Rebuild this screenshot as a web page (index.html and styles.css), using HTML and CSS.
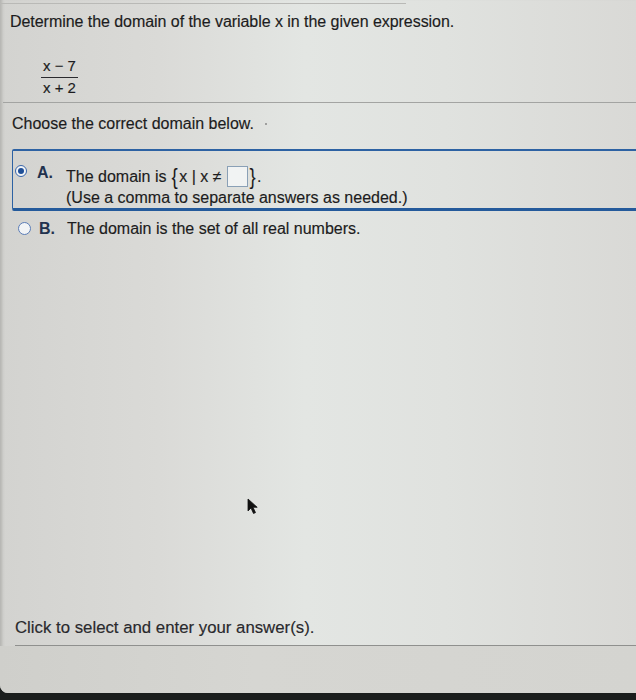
FILE: index.html
```html
<!DOCTYPE html>
<html>
<head>
<meta charset="utf-8">
<link rel="stylesheet" href="styles.css">
</head>
<body>
<div class="screen">
  <div class="topline"></div>
  <section class="question">
    <p class="title">Determine the domain of the variable x in the given expression.</p>
    <div class="frac">
      <span class="num">x − 7</span>
      <span class="den">x + 2</span>
    </div>
  </section>
  <div class="sep"></div>
  <p class="choose">Choose the correct domain below.<span class="speck"></span></p>
  <div class="opt opt-a">
    <span class="radio on"><span class="dotin"></span></span>
    <span class="letter">A.</span>
    <div class="opt-text">
      <div class="line1">The domain is <span class="brace first">{</span>x | x ≠<span class="ansbox"></span><span class="brace">}</span>.</div>
      <div class="line2">(Use a comma to separate answers as needed.)</div>
    </div>
  </div>
  <div class="opt opt-b">
    <span class="radio"></span>
    <span class="letter">B.</span>
    <div class="opt-text">The domain is the set of all real numbers.</div>
  </div>
  <div class="blank">
    <svg class="cursor" width="12" height="17" viewBox="0 0 12 17"><path d="M1 1 L1 13 L4 10 L6.5 15.5 L8.5 14.6 L6 9.3 L10.2 9.3 Z" fill="#111" stroke="#111" stroke-width="0.8" stroke-linejoin="round"/></svg>
  </div>
  <p class="click">Click to select and enter your answer(s).</p>
  <div class="footer"></div>
</div>
<div class="bezel"></div>
</body>
</html>
```
FILE: styles.css
```css
html, body {
  margin: 0;
  padding: 0;
  width: 636px;
  height: 700px;
  overflow: hidden;
  background: #1b1e1d;
}
body {
  font-family: "Liberation Sans", Arial, sans-serif;
  color: #1c1c20;
  -webkit-text-stroke: 0.15px #1c1c20;
}
.screen {
  position: relative;
  height: 693px;
  display: flex;
  flex-direction: column;
  border-bottom-left-radius: 8px;
  background:
    linear-gradient(90deg, #d3d3d0 0%, #dadad7 25%, #e3e6e3 48%, #e0e2df 70%, #d9d9d6 100%);
  box-shadow: inset 4px 0 3px -2px rgba(120,120,118,0.35);
}
.topline {
  height: 1px;
  margin: 3px 230px 0 0;
  background: #b9b9b6;
}
.question {
  padding: 9px 0 0 10px;
}
.title {
  margin: 0;
  font-size: 16px;
  line-height: 18px;
  letter-spacing: -0.05px;
}
.frac {
  display: inline-flex;
  flex-direction: column;
  align-items: center;
  margin: 26px 0 0 31px;
  font-size: 15px;
  line-height: 17px;
}
.num {
  padding: 0 2px 3px;
  border-bottom: 1px solid #2a2a2e;
}
.den {
  padding-top: 1px;
}
.sep {
  height: 1px;
  margin: 6px 0 0 3px;
  background: #a3a4a2;
}
.choose {
  margin: 12px 0 0 12px;
  font-size: 16px;
  line-height: 18px;
}
.speck {
  display: inline-block;
  width: 2px;
  height: 2px;
  margin-left: 11px;
  vertical-align: 4px;
  background: #888;
  border-radius: 1px;
}
.opt {
  display: flex;
  align-items: flex-start;
  font-size: 16px;
  line-height: 19px;
}
.opt-a {
  margin: 16px 0 0 12px;
  padding: 14px 0 1px 2px;
  border-top: 2px solid #2d62a3;
  border-left: 1.5px solid #2d62a3;
  border-bottom: 3px solid #245a9b;
  border-radius: 2px 0 0 2px;
}
.opt-b {
  margin: 8px 0 0 18px;
}
.radio {
  flex: none;
  width: 12px;
  height: 12px;
  margin-top: 3px;
  border: 1.5px solid #5a7cb6;
  border-radius: 50%;
  box-sizing: border-box;
  background: #f2f4f6;
  display: flex;
  align-items: center;
  justify-content: center;
}
.opt-b .radio {
  width: 13px;
  height: 13px;
}
.opt-a .radio {
  margin-top: 0;
  border: 1.5px solid #3a66aa;
}
.dotin {
  width: 6px;
  height: 6px;
  border-radius: 50%;
  background: #1f4f97;
}
.letter {
  flex: none;
  font-weight: bold;
  color: #22324e;
  -webkit-text-stroke: 0;
  margin-left: 10px;
  width: 29px;
}
.opt-a .letter {
  margin-top: -2px;
}
.opt-b .letter {
  margin-left: 8px;
  width: 28px;
}
.opt-text {
  flex: 1;
}
.line1 {
  display: flex;
  align-items: center;
  height: 23px;
  white-space: pre;
}
.line1 .brace {
  font-size: 22px;
  line-height: 23px;
  margin: 0 1px;
  transform: scaleX(0.85);
  display: inline-block;
  -webkit-text-stroke: 0;
}
.line1 .brace.first {
  margin-left: 0;
}
.ansbox {
  display: inline-block;
  width: 21px;
  height: 21px;
  margin-left: 5px;
  border: 1px solid #8aa0b6;
  background: #f1f3f3;
  box-sizing: border-box;
}
.blank {
  flex: 1;
  position: relative;
}
.cursor {
  position: absolute;
  left: 247px;
  top: 260px;
}
.click {
  margin: 0 0 0 15px;
  font-size: 16.8px;
  line-height: 18px;
  padding-bottom: 8px;
  border-bottom: 1px solid #8f908e;
  color: #2a2a2e;
}
.footer {
  height: 47px;
  background: linear-gradient(90deg, #cfcfcb 0%, #d6d6d2 40%, #d4d4d0 100%);
  border-bottom-left-radius: 8px;
}
.bezel {
  height: 7px;
  background: #1b1e1d;
}
```
